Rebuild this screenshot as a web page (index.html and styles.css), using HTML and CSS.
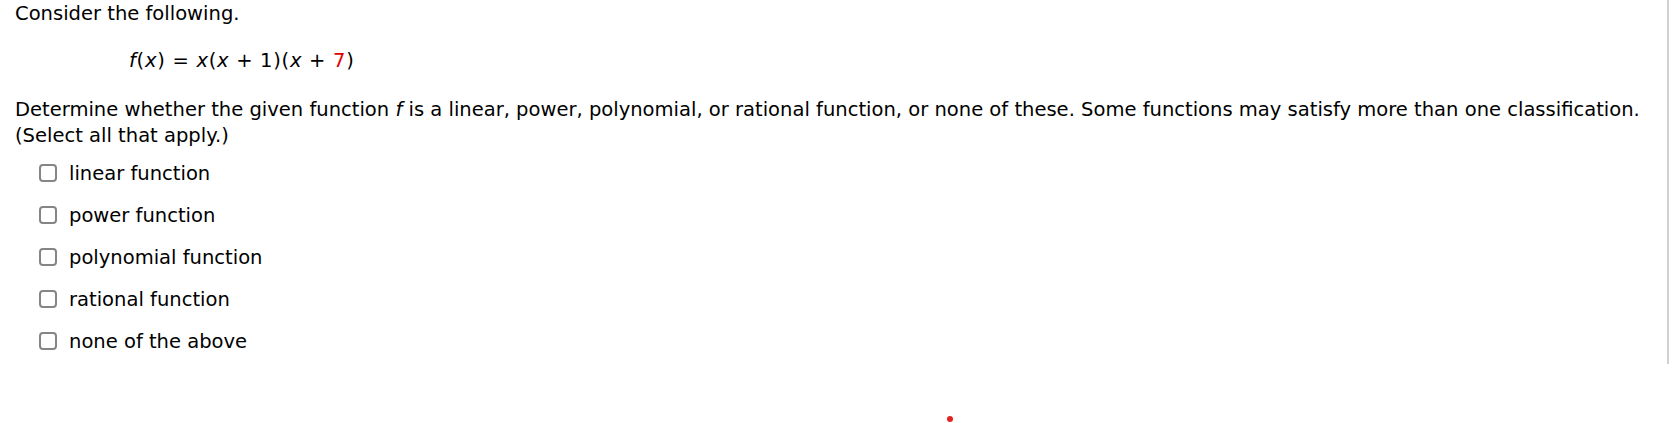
FILE: index.html
```html
<!DOCTYPE html>
<html>
<head>
<meta charset="utf-8">
<link rel="stylesheet" href="styles.css">
</head>
<body>
<div class="page">
  <div class="content">
    <p class="intro">Consider the following.</p>
    <p class="formula"><i>f</i>(<i>x</i>) = <i>x</i>(<i>x</i> + 1)(<i>x</i> + <span class="red">7</span>)</p>
    <p class="question">Determine whether the given function <i>f</i> is a linear, power, polynomial, or rational function, or none of these. Some functions may satisfy more than one classification.<br>(Select all that apply.)</p>
    <ul class="options">
      <li><span class="box"></span><span>linear function</span></li>
      <li><span class="box"></span><span>power function</span></li>
      <li><span class="box"></span><span>polynomial function</span></li>
      <li><span class="box"></span><span>rational function</span></li>
      <li><span class="box"></span><span>none of the above</span></li>
    </ul>
  </div>
  <div class="divider"></div>
</div>
<span class="dot"></span>
</body>
</html>
```
FILE: styles.css
```css
html, body {
  margin: 0;
  padding: 0;
  background: #fff;
}
body {
  font-family: "DejaVu Sans", Verdana, sans-serif;
  font-size: 19.55px;
  color: #000;
  width: 1672px;
  height: 423px;
  overflow: hidden;
  position: relative;
}
.page {
  display: flex;
}
.content {
  width: 1667px;
  padding: 0 0 0 15px;
  box-sizing: border-box;
}
.divider {
  width: 2px;
  height: 364px;
  background: #d0d0d0;
}
p {
  margin: 0;
}
.intro {
  margin-top: 1px;
  line-height: 26px;
}
.formula {
  margin-top: 21px;
  padding-left: 114px;
  line-height: 26px;
  letter-spacing: 0.7px;
}
.red {
  color: #e00000;
}
.question {
  margin-top: 23px;
  line-height: 26px;
}
.options {
  list-style: none;
  margin: 3px 0 0 0;
  padding: 0 0 0 24px;
}
.options li {
  display: flex;
  align-items: center;
  height: 42px;
  gap: 12px;
}
.box {
  width: 14px;
  height: 14px;
  border: 2px solid #858585;
  border-radius: 4px;
  flex: none;
}
.dot {
  position: absolute;
  left: 947px;
  top: 416px;
  width: 6px;
  height: 6px;
  border-radius: 50%;
  background: #e52222;
}
```
